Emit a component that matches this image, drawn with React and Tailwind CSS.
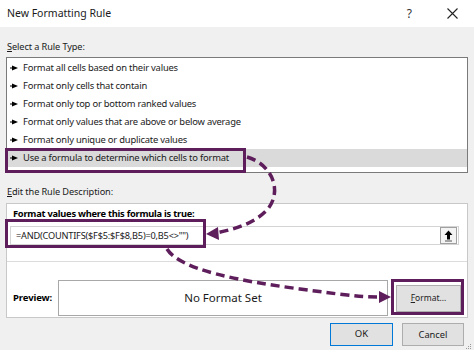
import React from 'react';

const PURPLE = '#5e1d5b';

const ruleTypes = [
  'Format all cells based on their values',
  'Format only cells that contain',
  'Format only top or bottom ranked values',
  'Format only values that are above or below average',
  'Format only unique or duplicate values',
  'Use a formula to determine which cells to format',
];

const Bullet = () => (
  <svg width="8" height="6" viewBox="0 0 8 6" className="shrink-0">
    <rect x="0" y="2.5" width="3" height="1" fill="#000" />
    <polygon points="2,0.5 8,3 2,5.5" fill="#000" />
  </svg>
);

const Overlay = () => (
  <svg width="474" height="354" className="absolute inset-0 pointer-events-none">
    {/* purple highlight boxes */}
    <rect x="6.5" y="149.5" width="238" height="22" fill="none" stroke={PURPLE} strokeWidth="3" />
    <rect x="6.5" y="220.5" width="198" height="26" fill="none" stroke={PURPLE} strokeWidth="3" />
    <rect x="392.5" y="280.5" width="70" height="33" fill="none" stroke={PURPLE} strokeWidth="3" />
    {/* dashed arrows */}
    <path d="M247,157 C272,164 284,192 266,211 C254,223 236,229 216,233" fill="none" stroke={PURPLE} strokeWidth="3.5" strokeDasharray="9 5" />
    <polygon points="206,234 218,227 219,240" fill={PURPLE} />
    <path d="M167,249 C180,270 240,281 300,289 S362,297 381,297" fill="none" stroke={PURPLE} strokeWidth="3.5" strokeDasharray="9 5" />
    <polygon points="391,297 379,291 379,303" fill={PURPLE} />
  </svg>
);

export default function App() {
  return (
    <div className="relative w-[474px] h-[354px] overflow-hidden bg-white text-black font-['Noto_Sans',sans-serif]">
      {/* Title bar */}
      <div className="h-[27px] flex items-center pl-[7px] pr-[16px]">
        <span className="text-[10.5px] text-[#1a1a1a]">New Formatting Rule</span>
        <span className="ml-auto text-[12px] mr-[35px] text-[#333]">?</span>
        <svg width="11" height="11" viewBox="0 0 11 11">
          <path d="M0.5,0.5 L10.5,10.5 M10.5,0.5 L0.5,10.5" stroke="#222" strokeWidth="1.1" />
        </svg>
      </div>

      {/* Body */}
      <div className="h-[323px] bg-[#f0f0f0] px-[6px] flex flex-col">
        <div className="mt-[13px] h-[14px] leading-[14px] text-[9.2px] tracking-[-0.1px] pl-[1px] text-[#1a1a1a]">
          <u>S</u>elect a Rule Type:
        </div>
        <div className="mt-[3px] h-[116px] bg-white border border-[#7a7a7a] pt-[1px] flex flex-col">
          {ruleTypes.map((t, i) => (
            <div
              key={t}
              className={`h-[18px] flex items-center gap-[5px] pl-[3px] text-[9.4px] tracking-[-0.2px] text-[#1a1a1a] ${i === 5 ? 'bg-[#dadada]' : ''}`}
            >
              <Bullet />
              <span>{t}</span>
            </div>
          ))}
        </div>

        <div className="mt-[12px] h-[14px] leading-[14px] text-[9.2px] tracking-[-0.1px] pl-[1px] text-[#1a1a1a]">
          <u>E</u>dit the Rule Description:
        </div>
        <div className="mt-[4px] h-[115px] bg-white border border-[#c8c8c8] flex flex-col px-[3px]">
          <div className="mt-[3px] h-[14px] leading-[14px] text-[9.3px] tracking-[-0.25px] font-bold pl-[3px]">
            Format values where this formula is true:
          </div>
          <div className="mt-[5px] h-[19px] mr-[5px] border border-[#d4d4d4] flex items-center pl-[5px] pr-[1px]">
            <span className="text-[9.2px] tracking-[-0.2px] text-[#1a1a1a]">=AND(COUNTIFS($F$5:$F$8,B5)=0,B5&lt;&gt;"")</span>
            <div className="ml-auto w-[17px] h-[17px] border border-[#a0a0a0] bg-[#f4f4f4] flex items-center justify-center">
              <svg width="9" height="12" viewBox="0 0 9 12">
                <path d="M4.5,0.5 L8.5,5 L6,5 L6,9.5 L3,9.5 L3,5 L0.5,5 Z" fill="#000" />
                <rect x="1" y="10.5" width="7" height="1" fill="#555" />
              </svg>
            </div>
          </div>
          <div className="mt-[16px] h-px bg-[#dcdcdc] -mx-[3px]" />
          <div className="mt-[18px] flex items-center">
            <span className="w-[48px] pl-[3px] text-[9.5px] tracking-[-0.1px] font-bold">Preview:</span>
            <div className="w-[330px] h-[36px] border border-[#a8a8a8] flex items-center justify-center text-[11.5px] text-[#1a1a1a]">
              No Format Set
            </div>
            <div className="ml-[8px] w-[65px] h-[27px] bg-[#e1e1e1] border border-[#adadad] flex items-center justify-center text-[8.5px] text-[#222]">
              <span><u>F</u>ormat...</span>
            </div>
          </div>
        </div>

        <div className="mt-[5px] flex justify-end gap-[9px] pr-[4px]">
          <div className="w-[63px] h-[23px] bg-[#e1e1e1] border border-[#0078d7] flex items-center justify-center text-[9.5px] text-[#1a1a1a]">
            OK
          </div>
          <div className="w-[62px] h-[23px] bg-[#e1e1e1] border border-[#adadad] flex items-center justify-center text-[9.3px] text-[#1a1a1a]">
            Cancel
          </div>
        </div>
      </div>
      <div className="absolute right-[3px] bottom-[5px] flex flex-col items-end gap-[1px]">
        <div className="w-[1px] h-[1px] bg-[#999]" />
        <div className="flex gap-[1px]"><div className="w-[1px] h-[1px] bg-[#999]" /><div className="w-[1px] h-[1px] bg-[#999]" /></div>
        <div className="flex gap-[1px]"><div className="w-[1px] h-[1px] bg-[#999]" /><div className="w-[1px] h-[1px] bg-[#999]" /><div className="w-[1px] h-[1px] bg-[#999]" /></div>
      </div>

      <Overlay />
    </div>
  );
}
